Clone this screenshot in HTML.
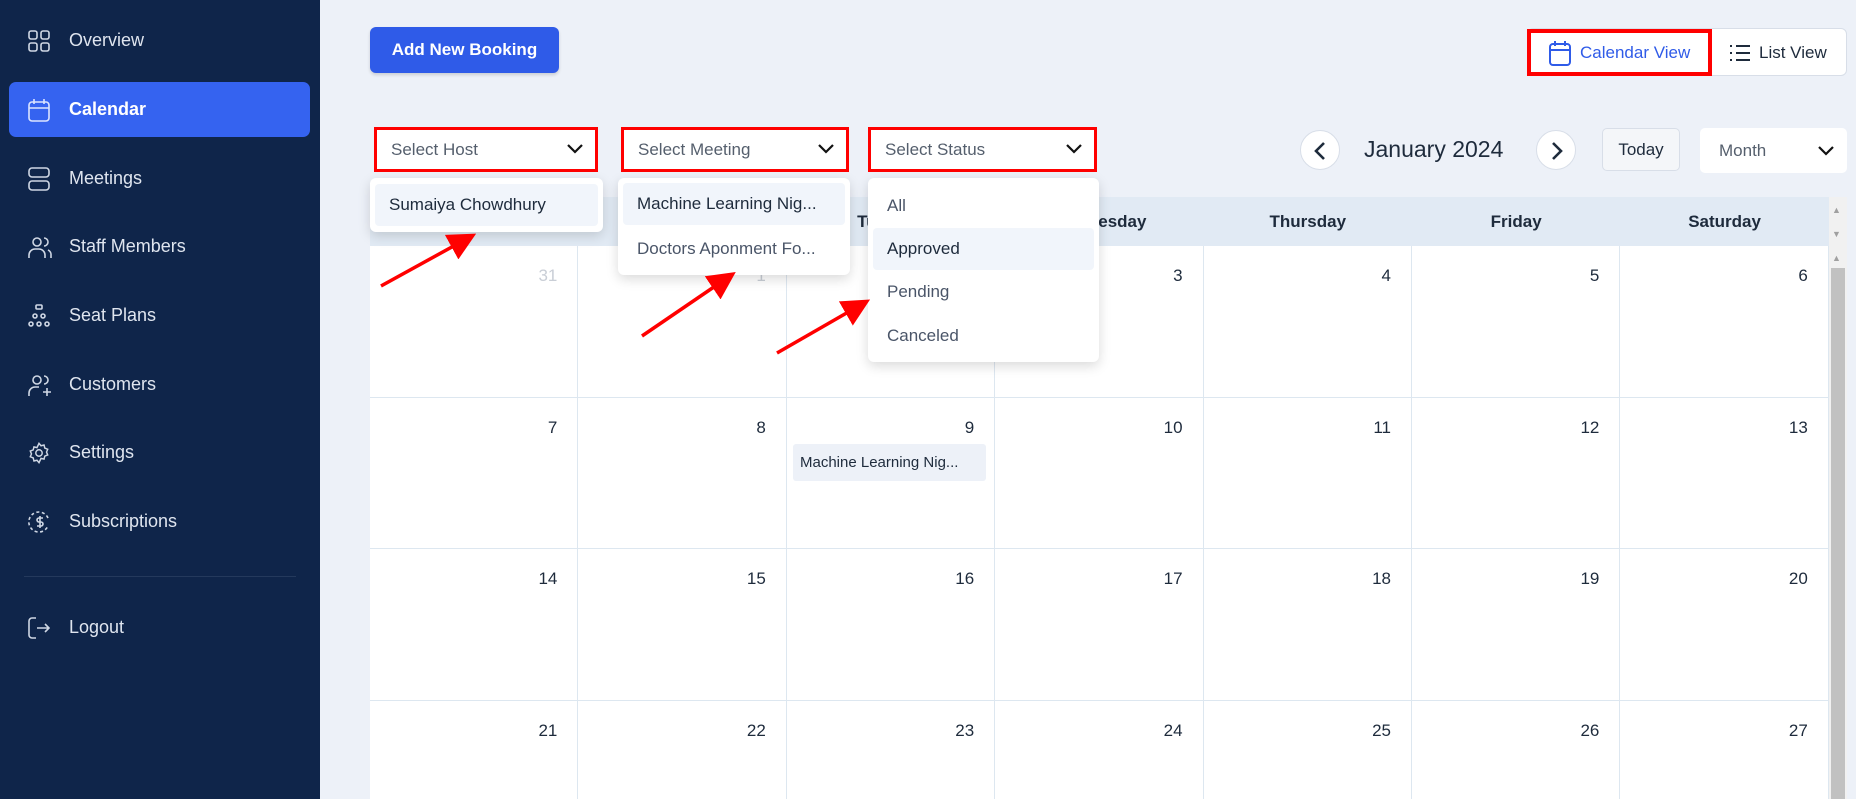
<!DOCTYPE html>
<html><head><meta charset="utf-8"><style>
*{box-sizing:border-box;margin:0;padding:0}
html,body{width:1856px;height:799px;overflow:hidden}
body{background:#edf1f8;font-family:"Liberation Sans",sans-serif;position:relative}
.sb{position:absolute;left:0;top:0;width:320px;height:799px;background:#0f254a}
.nav{position:absolute;left:9px;width:301px;height:55px;border-radius:7px;color:#dfe5ef;font-size:18px;display:flex;align-items:center}
.nav svg{position:absolute;left:19px;top:50%;transform:translateY(-50%)}
.nav span{position:absolute;left:60px}
.nav.act{background:#3563f0;color:#fff;font-weight:bold}
.abs{position:absolute}
.btn{left:370px;top:27px;width:189px;height:46px;background:#2f5be8;border-radius:6px;color:#fff;font-weight:bold;font-size:17px;display:flex;align-items:center;justify-content:center;box-shadow:0 2px 3px rgba(0,0,0,.15)}
.sel{height:45px;background:#fff;border:3px solid #f00;font-size:17px;color:#555f6d;display:flex;align-items:center;padding-left:14px}
.sel svg{position:absolute;right:12px;top:14px}
.dd{background:#fff;border-radius:6px;box-shadow:0 4px 12px rgba(0,0,0,.15);font-size:17px;color:#4a5568}
.it{position:absolute;left:5px;right:5px;height:42px;display:flex;align-items:center;padding-left:14px;border-radius:4px}
.it.h{background:#f1f5fb;color:#1e2b3c}
.grid{position:absolute;left:370px;top:197px;width:1459px;height:602px;background:#fff;overflow:hidden}
.hd{position:absolute;top:0;height:49px;width:208.4px;background:#e1eaf4;font-weight:bold;font-size:17px;color:#1e2b3c;display:flex;align-items:center;justify-content:center}
.cell{position:absolute;width:208.4px;border-right:1px solid #dde7f0;border-bottom:1px solid #dde7f0}
.cell b{position:absolute;right:20px;top:20px;font-weight:normal;font-size:17px;color:#1e2b3c}
.cell b.f{color:#c9ced6}
</style></head><body>
<div class="sb">
 <div class="nav" style="top:13px"><svg width="22" height="22" viewBox="0 0 22 22" fill="none" stroke="#cfd7e4" stroke-width="1.6"><rect x="1" y="1" width="8" height="8" rx="2"/><rect x="13" y="1" width="8" height="8" rx="2"/><rect x="1" y="13" width="8" height="8" rx="2"/><rect x="13" y="13" width="8" height="8" rx="2"/></svg><span>Overview</span></div>
 <div class="nav act" style="top:82px"><svg width="22" height="24" viewBox="0 0 22 24" fill="none" stroke="#dbe4ff" stroke-width="1.6"><rect x="1" y="4" width="20" height="19" rx="3"/><path d="M1 10h20M6 1v5M16 1v5"/></svg><span>Calendar</span></div>
 <div class="nav" style="top:151px"><svg width="22" height="24" viewBox="0 0 22 24" fill="none" stroke="#cfd7e4" stroke-width="1.6"><rect x="1" y="1" width="20" height="9" rx="3"/><rect x="1" y="14" width="20" height="9" rx="3"/></svg><span>Meetings</span></div>
 <div class="nav" style="top:219px"><svg width="24" height="24" viewBox="0 0 24 24" fill="none" stroke="#cfd7e4" stroke-width="1.6"><circle cx="9" cy="7" r="4"/><path d="M1 23v-3a6 6 0 0 1 6-6h4a6 6 0 0 1 6 6v3M16 3a4 4 0 0 1 0 8M20 15a5 5 0 0 1 3 5v3"/></svg><span>Staff Members</span></div>
 <div class="nav" style="top:288px"><svg width="22" height="24" viewBox="0 0 22 24" fill="none" stroke="#cfd7e4" stroke-width="1.6"><rect x="8" y="1" width="6" height="4" rx="1"/><circle cx="7" cy="12" r="2"/><circle cx="15" cy="12" r="2"/><circle cx="3" cy="20" r="2"/><circle cx="11" cy="20" r="2"/><circle cx="19" cy="20" r="2"/></svg><span>Seat Plans</span></div>
 <div class="nav" style="top:357px"><svg width="24" height="24" viewBox="0 0 24 24" fill="none" stroke="#cfd7e4" stroke-width="1.6"><circle cx="9" cy="7" r="4"/><path d="M1 23v-3a6 6 0 0 1 6-6h4M16 3a4 4 0 0 1 0 8M19 15v8M15 19h8"/></svg><span>Customers</span></div>
 <div class="nav" style="top:425px"><svg width="22" height="22" viewBox="0 0 24 24" fill="none" stroke="#cfd7e4" stroke-width="1.6"><circle cx="12" cy="12" r="3.5"/><path d="M12 1.5l2.2 2.6 3.3-.8.8 3.3 3.2 1.3-1.3 3.1 1.3 3.1-3.2 1.3-.8 3.3-3.3-.8L12 22.5l-2.2-2.6-3.3.8-.8-3.3-3.2-1.3 1.3-3.1-1.3-3.1 3.2-1.3.8-3.3 3.3.8z"/></svg><span>Settings</span></div>
 <div class="nav" style="top:494px"><svg width="24" height="24" viewBox="0 0 24 24" fill="none" stroke="#cfd7e4" stroke-width="1.6"><path d="M20 8A10 10 0 1 0 20 16" stroke-dasharray="3 2.5"/><path d="M15 8h-4a2 2 0 0 0 0 4h2a2 2 0 0 1 0 4H9M12 6v12"/></svg><span>Subscriptions</span></div>
 <div class="abs" style="left:24px;top:576px;width:272px;height:1px;background:#24395c"></div>
 <div class="nav" style="top:600px"><svg width="22" height="22" viewBox="0 0 22 22" fill="none" stroke="#cfd7e4" stroke-width="1.6"><path d="M8 1H4a3 3 0 0 0-3 3v14a3 3 0 0 0 3 3h4M9 11h12M17 7l4 4-4 4"/></svg><span>Logout</span></div>
</div>

<div class="abs btn">Add New Booking</div>

<div class="abs" style="left:1527px;top:28px;width:320px;height:48px;background:#fff;border:1px solid #d8dee8;border-radius:6px"></div>
<div class="abs" style="left:1527px;top:29px;width:185px;height:47px;border:4px solid #f00;display:flex;align-items:center;padding-left:18px;color:#2f5be8;font-size:17px"><svg width="22" height="26" viewBox="0 0 22 26" fill="none" stroke="#2f5be8" stroke-width="2"><rect x="1" y="4" width="20" height="21" rx="3"/><path d="M1 10h20M6 1v5M16 1v5"/></svg><span style="margin-left:9px">Calendar View</span></div>
<div class="abs" style="left:1730px;top:29px;height:47px;display:flex;align-items:center;font-size:17px;color:#1e2b3c"><svg width="20" height="18" viewBox="0 0 20 18" stroke="#1e2b3c" stroke-width="2"><path d="M0 2h2M6 2h14M0 9h2M6 9h14M0 16h2M6 16h14"/></svg><span style="margin-left:9px">List View</span></div>

<div class="abs sel" style="left:374px;top:127px;width:224px">Select Host<svg width="16" height="10" viewBox="0 0 16 10" fill="none" stroke="#111" stroke-width="2.2"><path d="M1 1l7 7 7-7"/></svg></div>
<div class="abs sel" style="left:621px;top:127px;width:228px">Select Meeting<svg width="16" height="10" viewBox="0 0 16 10" fill="none" stroke="#111" stroke-width="2.2"><path d="M1 1l7 7 7-7"/></svg></div>
<div class="abs sel" style="left:868px;top:127px;width:229px">Select Status<svg width="16" height="10" viewBox="0 0 16 10" fill="none" stroke="#111" stroke-width="2.2"><path d="M1 1l7 7 7-7"/></svg></div>

<div class="abs" style="left:1300px;top:130px;width:40px;height:40px;border-radius:50%;background:#fff;border:1px solid #d8dee8"><svg style="position:absolute;left:13px;top:11px" width="12" height="18" viewBox="0 0 12 18" fill="none" stroke="#1e2b3c" stroke-width="2.6"><path d="M10 1L2 9l8 8"/></svg></div>
<div class="abs" style="left:1364px;top:136px;font-size:23px;color:#1e2b3c">January 2024</div>
<div class="abs" style="left:1536px;top:130px;width:40px;height:40px;border-radius:50%;background:#fff;border:1px solid #d8dee8"><svg style="position:absolute;left:14px;top:11px" width="12" height="18" viewBox="0 0 12 18" fill="none" stroke="#1e2b3c" stroke-width="2.6"><path d="M2 1l8 8-8 8"/></svg></div>
<div class="abs" style="left:1602px;top:128px;width:78px;height:43px;background:#f4f6f9;border:1px solid #d8dee8;border-radius:5px;display:flex;align-items:center;justify-content:center;font-size:17px;color:#1e2b3c">Today</div>
<div class="abs" style="left:1700px;top:128px;width:147px;height:45px;background:#fff;border-radius:5px;font-size:17px;color:#555f6d;display:flex;align-items:center;padding-left:19px">Month<svg style="position:absolute;right:13px;top:18px" width="16" height="10" viewBox="0 0 16 10" fill="none" stroke="#111" stroke-width="2.2"><path d="M1 1l7 7 7-7"/></svg></div>

<div class="grid">
 <div class="hd" style="left:0">Sunday</div><div class="hd" style="left:208.4px">Monday</div><div class="hd" style="left:416.8px">Tuesday</div><div class="hd" style="left:625.2px">Wednesday</div><div class="hd" style="left:833.6px">Thursday</div><div class="hd" style="left:1042px">Friday</div><div class="hd" style="left:1250.4px">Saturday</div>
 <div id="cells"></div>
</div>
<div class="abs" style="left:1829px;top:197px;width:18px;height:602px;background:#f1f1f1"></div>
<div class="abs" style="left:1831px;top:268px;width:14px;height:531px;background:#c1c1c1"></div>
<div class="abs" style="left:1832px;top:204px;font-size:9px;color:#a0a0a0;line-height:12px">▲<br><br>▼<br><br>▲</div>

<div class="abs" style="left:793px;top:444px;width:193px;height:37px;background:#edf1f8;border-radius:3px;font-size:15px;color:#1e2b3c;display:flex;align-items:center;padding-left:7px">Machine Learning Nig...</div>

<div class="abs dd" style="left:370px;top:178px;width:233px;height:54px"><div class="it h" style="top:6px">Sumaiya Chowdhury</div></div>
<div class="abs dd" style="left:618px;top:178px;width:232px;height:97px"><div class="it h" style="top:5px">Machine Learning Nig...</div><div class="it" style="top:50px">Doctors Aponment Fo...</div></div>
<div class="abs dd" style="left:868px;top:178px;width:231px;height:184px"><div class="it" style="top:7px">All</div><div class="it h" style="top:50px">Approved</div><div class="it" style="top:93px">Pending</div><div class="it" style="top:137px">Canceled</div></div>

<svg class="abs" style="left:0;top:0" width="1856" height="799">
<defs><marker id="a" markerWidth="8" markerHeight="8" refX="6" refY="4" orient="auto"><path d="M0 0L8 4 0 8z" fill="#f00"/></marker></defs>
<g stroke="#f00" stroke-width="3.5" marker-end="url(#a)"><path d="M381 286L470 237"/><path d="M642 336L730 276"/><path d="M777 353L864 303"/></g>
</svg>
<script>
var c=document.getElementById('cells'),h='';
var d=[31,1,2,3,4,5,6,7,8,9,10,11,12,13,14,15,16,17,18,19,20,21,22,23,24,25,26,27];
for(var i=0;i<28;i++){var r=Math.floor(i/7),k=i%7;
h+='<div class="cell abs" style="left:'+(k*208.4)+'px;top:'+(49+r*151.5)+'px;height:'+(r==3?98.5:151.5)+'px;'+(r==3?'border-bottom:none':'')+'"><b class="'+(i<2?'f':'')+'">'+d[i]+'</b></div>';}
c.innerHTML=h;
</script>
</body></html>
